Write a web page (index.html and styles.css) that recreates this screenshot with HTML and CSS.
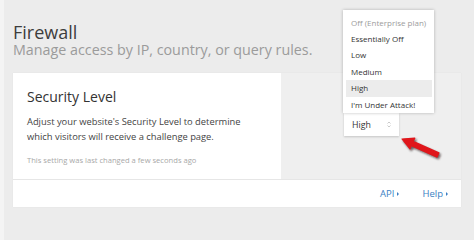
FILE: index.html
```html
<!DOCTYPE html>
<html lang="en">
<head>
<meta charset="utf-8">
<title>Firewall</title>
<link rel="stylesheet" href="styles.css">
</head>
<body>
<div class="page">
  <header class="head">
    <h1 class="title">Firewall</h1>
    <p class="subtitle">Manage access by IP, country, or query rules.</p>
  </header>
  <section class="card">
    <div class="card-body">
      <div class="info">
        <h2 class="card-title">Security Level</h2>
        <p class="desc">Adjust your website's Security Level to determine which visitors will receive a challenge page.</p>
        <p class="meta">This setting was last changed a few seconds ago</p>
      </div>
      <div class="control">
        <div class="select-wrap">
          <ul class="menu">
            <li class="item disabled">Off (Enterprise plan)</li>
            <li class="item">Essentially Off</li>
            <li class="item">Low</li>
            <li class="item">Medium</li>
            <li class="item active">High</li>
            <li class="item">I'm Under Attack!</li>
          </ul>
          <div class="select">
            <span class="select-value">High</span>
            <svg class="carets" width="4" height="7" viewBox="0 0 4 7"><path d="M0.5 2.5 L2 1 L3.5 2.5 M0.5 4.5 L2 6 L3.5 4.5" fill="none" stroke="#bdbdbd" stroke-width="0.8"/></svg>
          </div>
        </div>
        <svg class="arrow" width="46" height="28" viewBox="0 0 46 28">
          <defs>
            <filter id="blur" x="-20%" y="-20%" width="140%" height="140%"><feGaussianBlur stdDeviation="0.8"/></filter>
          </defs>
          <polygon transform="translate(1.4 1.6)" filter="url(#blur)" fill="rgba(40,20,20,0.6)" stroke="rgba(40,20,20,0.6)" stroke-width="1.2" stroke-linejoin="round" points="4,5 16.8,4.2 15.1,7.4 40.9,18.9 39.1,23.1 13.3,11.6 12,15"/>
          <polygon fill="#e0161b" stroke="#e0161b" stroke-width="1.2" stroke-linejoin="round" points="4,5 16.8,4.2 15.1,7.4 40.9,18.9 39.1,23.1 13.3,11.6 12,15"/>
        </svg>
      </div>
    </div>
    <footer class="card-foot">
      <a class="link" href="#">API</a>
      <a class="link" href="#">Help</a>
    </footer>
  </section>
</div>
</body>
</html>
```
FILE: styles.css
```css
html, body {
  margin: 0;
  padding: 0;
}
body {
  background: linear-gradient(to right, #f4f4f4 4px, #ececec 4px);
  font-family: "Open Sans", "DejaVu Sans", sans-serif;
}
.page {
  position: relative;
  margin-left: 4px;
  width: 464px;
  height: 214px;
  box-sizing: border-box;
  padding: 22px 7px 0 9px;
  background: #ececec;
  overflow: hidden;
}
.head {
  margin-bottom: 16px;
}
.title {
  margin: 0;
  font-size: 18px;
  line-height: 20px;
  font-weight: 400;
  color: #3d3d3d;
}
.subtitle {
  margin: 0;
  font-size: 14.3px;
  line-height: 15px;
  color: #9b9b9b;
  white-space: nowrap;
}
.card {
  width: 448px;
  background: #fff;
  box-shadow: 0 0 1px rgba(0, 0, 0, 0.08);
}
.card-body {
  display: flex;
  height: 106px;
}
.info {
  width: 268px;
  box-sizing: border-box;
  padding: 15px 14px 0 14px;
}
.card-title {
  margin: 0;
  font-size: 14px;
  line-height: 18px;
  font-weight: 400;
  color: #333;
}
.desc {
  margin: 9px 0 0;
  max-width: 226px;
  font-size: 9.35px;
  line-height: 14.5px;
  color: #444;
}
.meta {
  margin: 10.5px 0 0;
  font-size: 7.6px;
  line-height: 11px;
  color: #a8a8a8;
  white-space: nowrap;
}
.control {
  position: relative;
  flex: 1;
  box-sizing: border-box;
  padding: 40px 0 0 63px;
  background: #efefef;
}
.select-wrap {
  position: relative;
  width: 55px;
}
.select {
  display: flex;
  align-items: center;
  justify-content: space-between;
  height: 23px;
  box-sizing: border-box;
  padding: 0 8px;
  background: #fff;
  box-shadow: 0 1px 2px rgba(0, 0, 0, 0.18);
  font-size: 8.8px;
  color: #333;
}
.carets {
  display: block;
}
.menu {
  position: absolute;
  bottom: 100%;
  left: -1px;
  width: 91px;
  margin: 0;
  padding: 5px 0 0;
  list-style: none;
  background: #fff;
  box-shadow: 0 0 3px rgba(0, 0, 0, 0.25);
  z-index: 2;
}
.item {
  height: 16.4px;
  line-height: 16.4px;
  margin: 0 2px 0 3px;
  padding-left: 5px;
  font-size: 8px;
  color: #333;
  white-space: nowrap;
}
.item.disabled {
  color: #9c9c9c;
}
.item.active {
  background: #ececec;
}
.arrow {
  position: absolute;
  left: 117px;
  top: 61px;
}
.card-foot {
  display: flex;
  justify-content: flex-end;
  align-items: center;
  gap: 23px;
  height: 28px;
  box-sizing: border-box;
  padding-right: 13px;
  border-top: 1px solid #e6e6e6;
  font-size: 9.5px;
}
.link {
  display: flex;
  align-items: center;
  color: #3b7fc4;
  text-decoration: none;
}
.link::after {
  content: "";
  margin-left: 3px;
  border-left: 2.5px solid #3b7fc4;
  border-top: 2px solid transparent;
  border-bottom: 2px solid transparent;
}
```
